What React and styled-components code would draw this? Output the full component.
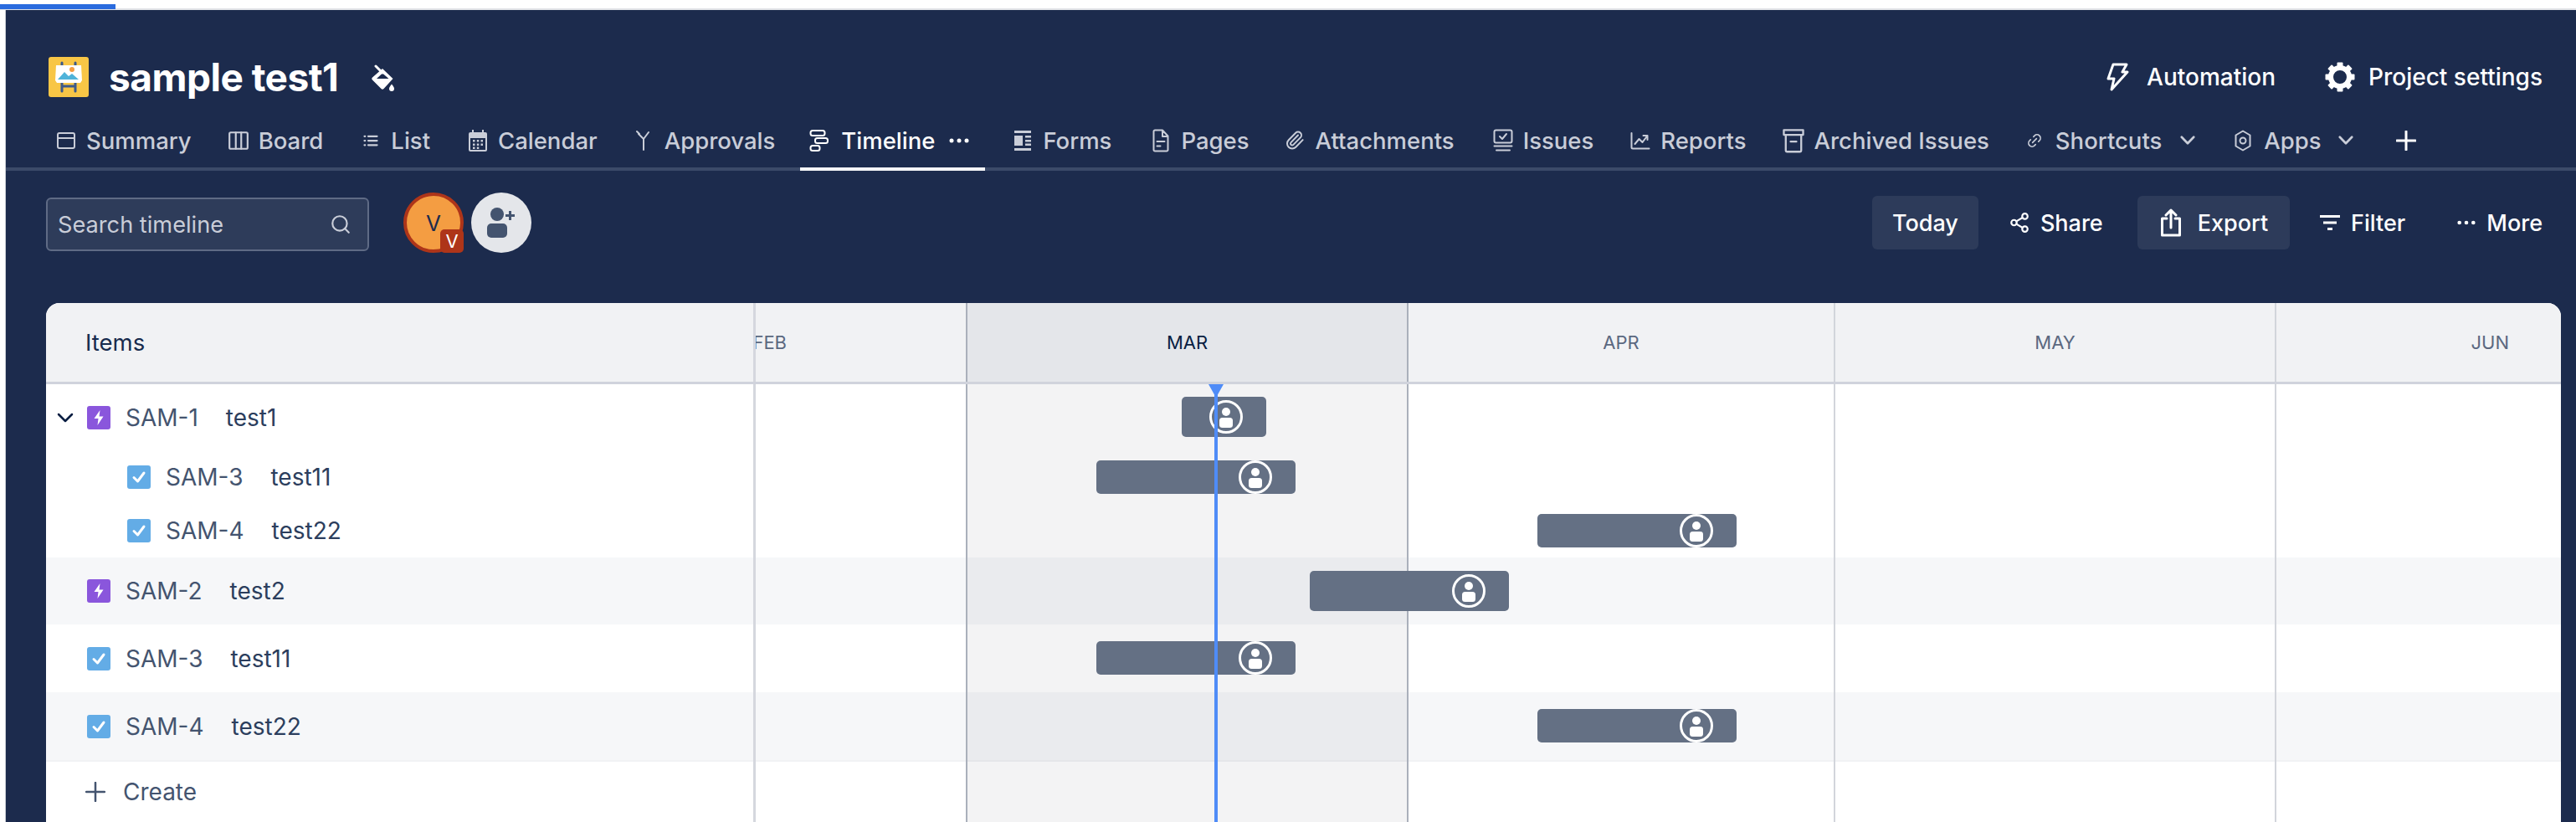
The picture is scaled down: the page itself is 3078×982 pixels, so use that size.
import React from 'react'
import styled, { createGlobalStyle } from 'styled-components'
import { Search, Share2, Paperclip, Link2 } from 'lucide-react'

const Global = createGlobalStyle`
    html, body {
        margin: 0;
        padding: 0;
        background: #ffffff;
        overflow: hidden;
    }
    body {
        font-family: Inter, "Liberation Sans", sans-serif;
    }
    * {
        box-sizing: border-box;
    }
`;

const Page = styled.div`
    width: 3078px;
    height: 982px;
    display: flex;
    flex-direction: column;
    overflow: hidden;
`;

const LoadStrip = styled.div`
    height: 12px;
    flex: none;
    padding-top: 5px;
    border-bottom: 2px solid #e0e2e6;
`;

const LoadBar = styled.div`
    width: 138px;
    height: 6px;
    background: #2a6bde;
`;

const Shell = styled.div`
    flex: 1;
    min-height: 0;
    margin-left: 6px;
    background: #1c2b4d;
    border-left: 1px solid #c9ccd3;
    display: flex;
    flex-direction: column;
`;

const TitleRow = styled.div`
    height: 123px;
    flex: none;
    padding: 48px 40px 11px 51px;
    display: flex;
    align-items: center;
    justify-content: space-between;
`;

const TitleLeft = styled.div`
    display: flex;
    align-items: center;
`;

const ProjectName = styled.h1`
    margin: 0 0 0 24px;
    font-size: 46px;
    line-height: 56px;
    font-weight: 700;
    letter-spacing: -0.5px;
    color: #ffffff;
`;

const Bucket = styled.svg`
    width: 28px;
    height: 35px;
    margin-left: 40px;
    margin-top: 4px;
`;

const TitleActions = styled.div`
    display: flex;
    align-items: center;
    color: #ffffff;
    font-size: 28px;
    font-weight: 500;
`;

const TitleAction = styled.div`
    display: flex;
    align-items: center;
    gap: ${p => p.$gap}px;
    margin-left: ${p => p.$ml || 0}px;
`;

const Tabs = styled.nav`
    height: 69px;
    flex: none;
    border-bottom: 4px solid #3b4a69;
    padding-left: 59px;
    display: flex;
    align-items: stretch;
`;

const Tab = styled.div`
    display: flex;
    align-items: center;
    height: 69px;
    margin-left: ${p => p.$ml || 0}px;
    padding: 0 ${p => (p.$active ? 18 : 0)}px 0 ${p => (p.$active ? 11 : 0)}px;
    color: ${p => (p.$active ? '#ffffff' : '#c9cdd8')};
    border-bottom: 4px solid ${p => (p.$active ? '#f4f5f7' : 'transparent')};
    font-size: 27.5px;
    font-weight: 500;
    white-space: nowrap;
`;

const TabIcon = styled.span`
    width: ${p => p.$w}px;
    margin-right: ${p => p.$gap || 0}px;
    margin-left: ${p => p.$before || 0}px;
    display: flex;
    align-items: center;
    justify-content: center;
`;

const AddTab = styled.div`
    display: flex;
    align-items: center;
    margin-left: 51px;
    color: #ffffff;
`;

const Toolbar = styled.div`
    height: 158px;
    flex: none;
    padding: 30px 40px 0 48px;
    display: flex;
    align-items: flex-start;
    justify-content: space-between;
`;

const ToolLeft = styled.div`
    display: flex;
    align-items: center;
`;

const SearchBox = styled.div`
    width: 386px;
    height: 64px;
    padding: 0 19px 0 12px;
    border: 2px solid #5f6b85;
    border-radius: 6px;
    background: #2e3c5a;
    color: #c9cdd8;
    font-size: 27.2px;
    display: flex;
    align-items: center;
    justify-content: space-between;
`;

const Avatars = styled.div`
    margin-left: 41px;
    margin-top: -4px;
    display: flex;
    gap: 9px;
`;

const UserAvatar = styled.div`
    position: relative;
    width: 72px;
    height: 72px;
    border-radius: 50%;
    background: #f49d42;
    border: 4px solid #ae3519;
    color: #1c2b4d;
    font-size: 26px;
    display: flex;
    align-items: center;
    justify-content: center;
`;

const AvatarBadge = styled.span`
    position: absolute;
    right: -4px;
    bottom: -4px;
    width: 28px;
    height: 28px;
    border-radius: 5px;
    background: #ae3519;
    color: #ffffff;
    font-size: 22px;
    display: flex;
    align-items: center;
    justify-content: center;
`;

const AddPerson = styled.div`
    width: 72px;
    height: 72px;
    border-radius: 50%;
    background: #e4e6ea;
    display: flex;
    align-items: center;
    justify-content: center;
`;

const ToolRight = styled.div`
    display: flex;
    align-items: center;
`;

const ToolButton = styled.div`
    height: 64px;
    margin-left: ${p => p.$ml || 0}px;
    padding: 0 ${p => p.$px || 0}px;
    border-radius: 6px;
    background: ${p => (p.$filled ? '#2d3b5a' : 'transparent')};
    color: #ffffff;
    font-size: 27px;
    font-weight: 500;
    display: flex;
    align-items: center;
    gap: ${p => p.$gap || 0}px;
`;

const Card = styled.div`
    flex: 1;
    min-height: 0;
    margin: 0 18px 0 48px;
    background: #ffffff;
    border-radius: 16px 16px 0 0;
    overflow: hidden;
    display: flex;
    flex-direction: column;
`;

const HeadRow = styled.div`
    height: 97px;
    flex: none;
    display: flex;
    background: #f1f2f4;
    border-bottom: 3px solid #d0d3dc;
`;

const ItemsHead = styled.div`
    width: 845px;
    flex: none;
    padding-left: 47px;
    display: flex;
    align-items: center;
    color: #172b4d;
    font-size: 27.5px;
`;

const Months = styled.div`
    flex: 1;
    display: flex;
    border-left: 3px solid #d5d7de;
`;

const Month = styled.div`
    width: ${p => p.$w}px;
    flex: none;
    overflow: hidden;
    display: flex;
    align-items: center;
    justify-content: ${p => p.$justify || 'center'};
    padding: ${p => p.$padding || 0};
    background: ${p => (p.$current ? '#e4e6ea' : 'transparent')};
    color: ${p => (p.$current ? '#091e42' : '#5b6880')};
    font-size: 22px;
    border-right: 2px solid ${p => p.$line};
`;

const Body = styled.div`
    position: relative;
    flex: 1;
    min-height: 0;
`;

const Row = styled.div`
    height: ${p => p.$h}px;
    display: flex;
    background: ${p => (p.$striped ? '#f6f7f9' : 'transparent')};
`;

const ItemCell = styled.div`
    width: 845px;
    flex: none;
    padding-left: ${p => p.$indent}px;
    display: flex;
    align-items: center;
    font-size: 28px;
`;

const Twisty = styled.span`
    width: 36px;
    margin-left: -36px;
    display: flex;
    color: #091e42;
`;

const IssueKey = styled.span`
    margin-left: 18px;
    margin-right: 33px;
    color: #44546f;
`;

const IssueSummary = styled.span`
    color: #2c3e5d;
`;

const ChartCell = styled.div`
    position: relative;
    flex: 1;
    z-index: 2;
`;

const Bar = styled.div`
    position: absolute;
    left: ${p => p.$left}px;
    top: ${p => p.$top}px;
    width: ${p => p.$w}px;
    height: ${p => p.$h}px;
    padding-right: ${p => p.$pr}px;
    border-radius: 5px;
    background: #647084;
    display: flex;
    align-items: center;
    justify-content: flex-end;
`;

const CreateRow = styled.div`
    height: 74px;
    padding-left: 47px;
    border-top: 2px solid #f1f2f4;
    display: flex;
    align-items: center;
    gap: 21px;
    color: #44546f;
    font-size: 28px;
`;

const GridLayer = styled.div`
    position: absolute;
    top: 0;
    bottom: 0;
    left: 845px;
    right: 0;
    z-index: 1;
    display: flex;
    border-left: 3px solid #d5d7de;
`;

const GridColumn = styled.div`
    width: ${p => p.$w}px;
    flex: none;
    background: ${p => (p.$current ? 'rgba(30, 35, 60, 0.055)' : 'transparent')};
    border-right: 2px solid ${p => p.$line};
`;

const TodayLine = styled.div`
    position: absolute;
    top: 0;
    bottom: 0;
    left: 1396px;
    width: 4px;
    background: #4f8cf7;
    z-index: 3;
`;

const TodayArrow = styled.div`
    position: absolute;
    top: 0;
    left: -7px;
    width: 0;
    height: 0;
    border-left: 9px solid transparent;
    border-right: 9px solid transparent;
    border-top: 16px solid #4f8cf7;
`;

const Svg = ({ size = 28, w, h, vb = '0 0 24 24', children }) => (
    <svg width={w || size} height={h || size} viewBox={vb} fill="none" stroke="currentColor" strokeWidth="2" strokeLinecap="round" strokeLinejoin="round">
        {children}
    </svg>
);

const SummaryIcon = () => (
    <Svg w={26} h={24}><rect x="2" y="3" width="20" height="18" rx="2" /><path d="M2 9h20" /></Svg>
);
const BoardIcon = () => (
    <Svg w={28} h={26}><rect x="2" y="3" width="20" height="18" rx="1.5" /><path d="M9 3v18M15 3v18" /></Svg>
);
const ListIcon = () => (
    <Svg w={18} h={18}><path d="M8 5h14M8 12h14M8 19h14M2 5h1M2 12h1M2 19h1" strokeWidth="3" /></Svg>
);
const CalendarIcon = () => (
    <svg width="24" height="28" viewBox="0 0 24 28" fill="currentColor">
        <path fillRule="evenodd" d="M5 1h2v3h10V1h2v3h2a2 2 0 0 1 2 2v19a2 2 0 0 1-2 2H3a2 2 0 0 1-2-2V6a2 2 0 0 1 2-2h2V1zM3 11v14h18V11H3z" />
        <path d="M6 13h2.500v2.500H6zM10.800 13h2.500v2.500h-2.500zM15.500 13H18v2.500h-2.500zM6 17.500h2.500V20H6zM10.800 17.500h2.500V20h-2.500zM15.500 17.500H18V20h-2.500zM6 21.500h2.500V24H6zM10.800 21.500h2.500V24h-2.500z" />
    </svg>
);
const ApprovalsIcon = () => (
    <Svg w={18} h={26} vb="0 0 18 26"><path d="M9 24V11L3 5M9 11l6-8M1 2l3 3" /></Svg>
);
const TimelineIcon = () => (
    <Svg w={24} h={28} vb="0 0 24 28"><rect x="1.500" y="2" width="17" height="6" rx="2.500" /><rect x="7" y="11" width="15" height="6" rx="2.500" /><rect x="1.500" y="20" width="11" height="6" rx="2.500" /></Svg>
);
const DotsIcon = ({ w = 26 }) => (
    <svg width={w} height="8" viewBox="0 0 26 8" fill="currentColor"><circle cx="4" cy="4" r="2.500" /><circle cx="13" cy="4" r="2.500" /><circle cx="22" cy="4" r="2.500" /></svg>
);
const FormsIcon = () => (
    <svg width="20" height="26" viewBox="0 0 20 26" fill="currentColor">
        <path d="M0 1h20v3H0zM0 7h10v12H0zM13 7h7v2.500h-7zM13 12h7v2.500h-7zM13 16.500h7V19h-7zM0 22h20v3H0z" />
    </svg>
);
const PagesIcon = () => (
    <Svg w={20} h={28} vb="0 0 20 28"><path d="M3 1.500h9l6.500 7V25a1.500 1.500 0 0 1-1.500 1.500H3A1.500 1.500 0 0 1 1.500 25V3A1.500 1.500 0 0 1 3 1.500zM12 1.500V9h6.500M5.500 15h9M5.500 20.500h4" /></Svg>
);
const IssuesIcon = () => (
    <svg width="24" height="28" viewBox="0 0 24 28" fill="none" stroke="currentColor" strokeWidth="2" strokeLinecap="round" strokeLinejoin="round">
        <rect x="1.500" y="1.500" width="21" height="15" rx="2" />
        <path d="M8 9l3 3 5-6M1.500 20.500h21M4 25.500h16" />
    </svg>
);
const ReportsIcon = () => (
    <Svg w={27} h={24}><path d="M2 3v17a1.500 1.500 0 0 0 1.500 1.500H23M6 16l5-6 4 4 6-8M16 6h5v5" /></Svg>
);
const ArchiveIcon = () => (
    <Svg w={28} h={30} vb="0 0 24 26"><path d="M2 2h20v5H2zM4 7v16a1.500 1.500 0 0 0 1.500 1.500h13A1.500 1.500 0 0 0 20 23V7M9 14h6" /></Svg>
);
const AppsIcon = () => (
    <Svg w={22} h={26} vb="0 0 22 26"><path d="M11 1.500l8.500 5v13l-8.500 5-8.500-5v-13z" /><circle cx="11" cy="13" r="3.500" /></Svg>
);
const AutomationIcon = () => (
    <Svg w={28} h={34} vb="0 0 28 34"><path d="M9 2h16l-5 9h6L7 32l3-13H3z" strokeWidth="3" /></Svg>
);
const GearIcon = () => (
    <svg width="36" height="36" viewBox="0 0 36 36" fill="#ffffff">
        <path fillRule="evenodd" d="M18 4a14 14 0 1 0 0 28 14 14 0 0 0 0-28zm0 6a8 8 0 1 1 0 16 8 8 0 0 1 0-16z" />
        {[0, 45, 90, 135, 180, 225, 270, 315].map(a => (
            <rect key={a} x="14.500" y="0.500" width="7" height="7" rx="1" transform={`rotate(${a} 18 18)`} />
        ))}
    </svg>
);
const ExportIcon = () => (
    <Svg w={28} h={36} vb="0 0 28 36"><path d="M9 13H3.500v20h21V13H19M14 24V3M8 9l6-6 6 6" strokeWidth="3" /></Svg>
);
const FilterIcon = () => (
    <svg width="24" height="20" viewBox="0 0 24 20" fill="currentColor"><path d="M0 1h24v3H0zM4 8.500h16v3H4zM9 16h6v3H9z" /></svg>
);
const ChevronIcon = ({ w = 20, h = 12, stroke = 2.5 }) => (
    <svg width={w} height={h} viewBox="0 0 20 12" fill="none" stroke="currentColor" strokeWidth={stroke} strokeLinecap="round" strokeLinejoin="round" preserveAspectRatio="none">
        <path d="M2 2l8 8 8-8" />
    </svg>
);
const PlusIcon = ({ stroke = 2.5 }) => (
    <svg width="24" height="24" viewBox="0 0 24 24" fill="none" stroke="currentColor" strokeWidth={stroke} strokeLinecap="round">
        <path d="M12 1v22M1 12h22" />
    </svg>
);
const BucketIcon = () => (
    <Bucket viewBox="0 0 28 35" fill="#ffffff">
        <path d="M5 2l8 8" fill="none" stroke="#ffffff" strokeWidth="3" strokeLinecap="round" />
        <path fillRule="evenodd" d="M1 15.500L13 5l12.500 12L14.500 29c-1 1-2 1-3 0L1 18.500c-1-1-1-2 0-3zM6 17h14.500L13 10.500z" />
        <path d="M24 23.500c2 2.500 3 4 3 5.500a3 3 0 0 1-6 0c0-1.500 1-3 3-5.500z" />
    </Bucket>
);
const ProjectLogo = () => (
    <svg width="48" height="48" viewBox="0 0 48 48">
        <rect width="48" height="48" rx="3" fill="#f8c646" />
        <path d="M16 7v34M32 7v34M16 35h16" stroke="#3d5a8a" strokeWidth="3" strokeLinecap="round" />
        <path d="M9 10h30l1 18-2 3H10l-2-3z" fill="#ffffff" />
        <circle cx="28" cy="15" r="3" fill="#f49d42" />
        <path d="M11 27l8-9 5 5 4-3 8 7z" fill="#4fb3d9" />
    </svg>
);
const AddPersonIcon = () => (
    <svg width="36" height="38" viewBox="0 0 36 38" fill="#44546f">
        <circle cx="13" cy="9" r="8" />
        <rect x="1" y="20" width="24" height="17" rx="5" />
        <path d="M27 5h3v4h4v3h-4v4h-3v-4h-4V9h4z" />
    </svg>
);
const PersonRing = () => (
    <svg width="40" height="40" viewBox="0 0 40 40">
        <circle cx="20" cy="20" r="18.500" fill="#647084" stroke="#ffffff" strokeWidth="3" />
        <circle cx="20" cy="14" r="5" fill="#ffffff" />
        <rect x="12" y="21" width="16" height="12" rx="3.500" fill="#ffffff" />
    </svg>
);
const EpicIcon = () => (
    <svg width="28" height="28" viewBox="0 0 28 28">
        <rect width="28" height="28" rx="3" fill="#8a56dc" />
        <path d="M15.500 5l-7 10h5l-1 8 7-10.500h-5z" fill="#ffffff" />
    </svg>
);
const TaskIcon = () => (
    <svg width="28" height="28" viewBox="0 0 28 28">
        <rect width="28" height="28" rx="3" fill="#63ace6" />
        <path d="M8 14.500l4.500 4.500 7.500-10" fill="none" stroke="#ffffff" strokeWidth="3" strokeLinecap="round" strokeLinejoin="round" />
    </svg>
);

const tabs = [
    { label: 'Summary', icon: <SummaryIcon />, w: 26, gap: 11, ml: 0 },
    { label: 'Board', icon: <BoardIcon />, w: 28, gap: 10, ml: 42 },
    { label: 'List', icon: <ListIcon />, w: 18, gap: 15, ml: 48 },
    { label: 'Calendar', icon: <CalendarIcon />, w: 24, gap: 12, ml: 45 },
    { label: 'Approvals', icon: <ApprovalsIcon />, w: 18, gap: 16, ml: 46 },
    { label: 'Timeline', icon: <TimelineIcon />, w: 24, gap: 14, ml: 30, active: true },
    { label: 'Forms', icon: <FormsIcon />, w: 20, gap: 14, ml: 35 },
    { label: 'Pages', icon: <PagesIcon />, w: 20, gap: 14, ml: 49 },
    { label: 'Attachments', icon: <Paperclip size={25} strokeWidth={2} />, w: 24, gap: 13, ml: 42 },
    { label: 'Issues', icon: <IssuesIcon />, w: 24, gap: 12, ml: 46 },
    { label: 'Reports', icon: <ReportsIcon />, w: 27, gap: 11, ml: 42 },
    { label: 'Archived Issues', icon: <ArchiveIcon />, w: 28, gap: 11, ml: 42 },
    { label: 'Shortcuts', icon: <Link2 size={22} strokeWidth={2} style={{ transform: 'rotate(-45deg)' }} />, w: 20, gap: 15, ml: 44, before: 22 },
    { label: 'Apps', icon: <AppsIcon />, w: 22, gap: 14, ml: 46, before: 20 },
];

const months = [
    { label: 'FEB', w: 253, justify: 'flex-end', padding: '0 214px 0 0', line: '#aab0bb' },
    { label: 'MAR', w: 527, current: true, line: '#aab0bb' },
    { label: 'APR', w: 510, line: '#d2d5db' },
    { label: 'MAY', w: 527, line: '#d2d5db' },
    { label: 'JUN', w: 340, justify: 'flex-end', padding: '0 60px 0 0', line: 'transparent' },
];

const rows = [
    { id: 'SAM-1', title: 'test1', type: 'epic', h: 79, indent: 49, twisty: true, bar: { left: 512, top: 15, w: 101, h: 48, pr: 28 } },
    { id: 'SAM-3', title: 'test11', type: 'task', h: 64, indent: 97, bar: { left: 410, top: 12, w: 238, h: 40, pr: 28 } },
    { id: 'SAM-4', title: 'test22', type: 'task', h: 64, indent: 97, bar: { left: 937, top: 12, w: 238, h: 40, pr: 28 } },
    { id: 'SAM-2', title: 'test2', type: 'epic', h: 80, indent: 49, striped: true, bar: { left: 665, top: 16, w: 238, h: 48, pr: 28 } },
    { id: 'SAM-3', title: 'test11', type: 'task', h: 81, indent: 49, bar: { left: 410, top: 20, w: 238, h: 40, pr: 28 } },
    { id: 'SAM-4', title: 'test22', type: 'task', h: 81, indent: 49, striped: true, bar: { left: 937, top: 20, w: 238, h: 40, pr: 28 } },
];

const App = () => {
    return (
        <Page>
            <Global />
            <LoadStrip><LoadBar /></LoadStrip>
            <Shell>
                <TitleRow>
                    <TitleLeft>
                        <ProjectLogo />
                        <ProjectName>sample test1</ProjectName>
                        <BucketIcon />
                    </TitleLeft>
                    <TitleActions>
                        <TitleAction $gap={21}><AutomationIcon />Automation</TitleAction>
                        <TitleAction $gap={16} $ml={59}><GearIcon />Project settings</TitleAction>
                    </TitleActions>
                </TitleRow>

                <Tabs>
                    {tabs.map(tab => (
                        <Tab key={tab.label} $ml={tab.ml} $active={tab.active}>
                            <TabIcon $w={tab.w} $gap={tab.gap}>{tab.icon}</TabIcon>
                            {tab.label}
                            {tab.active && <TabIcon $w={26} $before={16}><DotsIcon /></TabIcon>}
                            {tab.before && <TabIcon $w={18} $before={tab.before}><ChevronIcon w={18} h={11} stroke={3} /></TabIcon>}
                        </Tab>
                    ))}
                    <AddTab><PlusIcon stroke={3} /></AddTab>
                </Tabs>

                <Toolbar>
                    <ToolLeft>
                        <SearchBox>
                            Search timeline
                            <Search size={26} strokeWidth={2} />
                        </SearchBox>
                        <Avatars>
                            <UserAvatar>V<AvatarBadge>V</AvatarBadge></UserAvatar>
                            <AddPerson><AddPersonIcon /></AddPerson>
                        </Avatars>
                    </ToolLeft>
                    <ToolRight>
                        <ToolButton $filled $px={24}>Today</ToolButton>
                        <ToolButton $ml={36} $gap={12}><Share2 size={26} strokeWidth={2} />Share</ToolButton>
                        <ToolButton $filled $ml={41} $px={26} $gap={18}><ExportIcon />Export</ToolButton>
                        <ToolButton $ml={36} $gap={13}><FilterIcon />Filter</ToolButton>
                        <ToolButton $ml={61} $gap={12}><DotsIcon w={24} />More</ToolButton>
                    </ToolRight>
                </Toolbar>

                <Card>
                    <HeadRow>
                        <ItemsHead>Items</ItemsHead>
                        <Months>
                            {months.map(m => (
                                <Month key={m.label} $w={m.w} $current={m.current} $justify={m.justify} $padding={m.padding} $line={m.line}>
                                    {m.label}
                                </Month>
                            ))}
                        </Months>
                    </HeadRow>
                    <Body>
                        {rows.map((row, i) => (
                            <Row key={i} $h={row.h} $striped={row.striped}>
                                <ItemCell $indent={row.indent}>
                                    {row.twisty && <Twisty><ChevronIcon /></Twisty>}
                                    {row.type === 'epic' ? <EpicIcon /> : <TaskIcon />}
                                    <IssueKey>{row.id}</IssueKey>
                                    <IssueSummary>{row.title}</IssueSummary>
                                </ItemCell>
                                <ChartCell>
                                    <Bar $left={row.bar.left} $top={row.bar.top} $w={row.bar.w} $h={row.bar.h} $pr={row.bar.pr}>
                                        <PersonRing />
                                    </Bar>
                                </ChartCell>
                            </Row>
                        ))}
                        <CreateRow><PlusIcon />Create</CreateRow>
                        <GridLayer>
                            {months.map(m => (
                                <GridColumn key={m.label} $w={m.w} $current={m.current} $line={m.line} />
                            ))}
                        </GridLayer>
                        <TodayLine><TodayArrow /></TodayLine>
                    </Body>
                </Card>
            </Shell>
        </Page>
    )
}

export default App;
